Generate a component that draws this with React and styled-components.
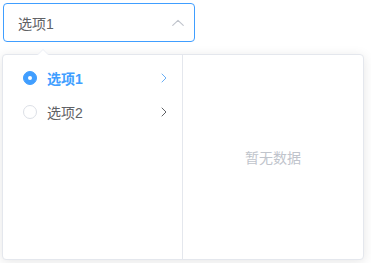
import React from "react"
import styled, { createGlobalStyle } from "styled-components"

const GlobalStyle = createGlobalStyle`
  body {
    margin: 0;
    background: #fff;
    font-family: "Liberation Sans", "Noto Sans CJK SC", sans-serif;
  }
`

const Page = styled.div`
  padding: 3px;
`

const Cascader = styled.div`
  position: relative;
  width: 362px;
`

const InputBox = styled.div`
  box-sizing: border-box;
  width: 192px;
  height: 39px;
  border: 1px solid #409eff;
  border-radius: 4px;
  display: flex;
  align-items: center;
  justify-content: space-between;
  padding: 0 9px 0 14px;
  font-size: 14px;
  color: #606266;
`

const Panel = styled.div`
  position: relative;
  margin-top: 12px;
  display: flex;
  border: 1px solid #e4e7ed;
  border-radius: 4px;
  background: #fff;
  box-shadow: 0 2px 12px 0 rgba(0, 0, 0, 0.1);
  margin-left: -1px;
  width: 360px;
`

const PopArrow = styled.div`
  position: absolute;
  top: -12px;
  left: 34px;
  width: 0;
  height: 0;
  border: 6px solid transparent;
  border-bottom-color: #ebeef5;

  &::after {
    content: "";
    position: absolute;
    left: -6px;
    top: -5px;
    border: 6px solid transparent;
    border-bottom-color: #fff;
  }
`

const Menu = styled.ul`
  list-style: none;
  margin: 0;
  padding: 6px 0;
  box-sizing: border-box;
  width: 180px;
  height: 204px;
  border-right: ${(p) => (p.$last ? "none" : "1px solid #e4e7ed")};
  display: flex;
  flex-direction: column;
`

const Item = styled.li`
  display: flex;
  align-items: center;
  height: 34px;
  padding: 0 12px 0 20px;
  font-size: 14px;
  color: ${(p) => (p.$active ? "#409eff" : "#606266")};
  font-weight: ${(p) => (p.$active ? 700 : 400)};
`

const Radio = styled.span`
  box-sizing: border-box;
  width: 14px;
  height: 14px;
  border-radius: 50%;
  border: 1px solid ${(p) => (p.$checked ? "#409eff" : "#dcdfe6")};
  background: ${(p) => (p.$checked ? "#409eff" : "#fff")};
  display: flex;
  align-items: center;
  justify-content: center;
  margin-right: 10px;

  &::after {
    content: "";
    width: 4px;
    height: 4px;
    border-radius: 50%;
    background: #fff;
    display: ${(p) => (p.$checked ? "block" : "none")};
  }
`

const Label = styled.span`
  flex: 1;
`

const Empty = styled.div`
  flex: 1;
  display: flex;
  align-items: center;
  justify-content: center;
  font-size: 14px;
  color: #c0c4cc;
`

const Chevron = ({ dir = "right", color, size = 12 }) => (
  <svg width={size} height={size} viewBox="0 0 12 12" fill="none">
    <path
      d={dir === "up" ? "M1.5 8 L6 3.8 L10.5 8" : "M4 2 L8 6 L4 10"}
      stroke={color}
      strokeWidth="1"
      strokeLinecap="round"
      strokeLinejoin="round"
    />
  </svg>
)

const options = [
  { label: "选项1", active: true },
  { label: "选项2", active: false },
]

export default function App() {
  return (
    <Page>
      <GlobalStyle />
      <Cascader>
        <InputBox>
          <span>选项1</span>
          <Chevron dir="up" color="#c0c4cc" size={14} />
        </InputBox>
        <Panel>
          <PopArrow />
          <Menu>
            {options.map((o) => (
              <Item key={o.label} $active={o.active}>
                <Radio $checked={o.active} />
                <Label>{o.label}</Label>
                <Chevron color={o.active ? "#6aaff5" : "#606266"} />
              </Item>
            ))}
          </Menu>
          <Menu $last>
            <Empty>暂无数据</Empty>
          </Menu>
        </Panel>
      </Cascader>
    </Page>
  )
}
